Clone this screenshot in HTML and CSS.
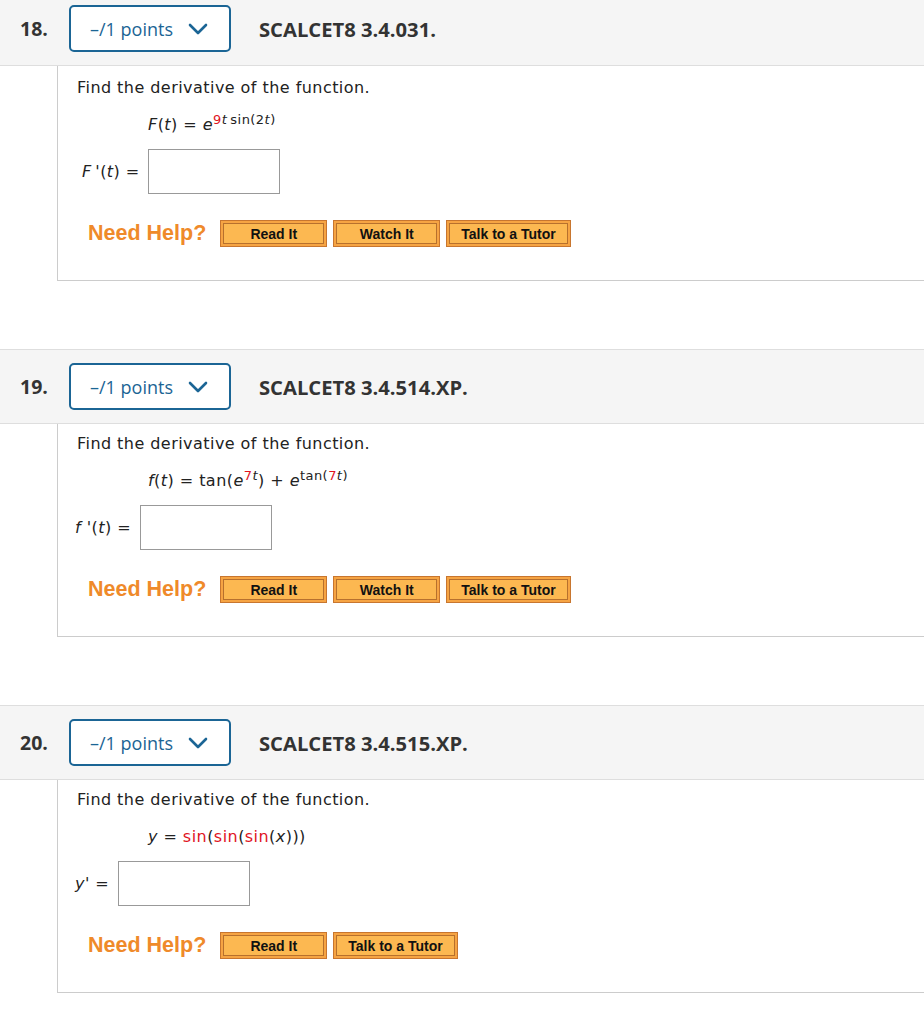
FILE: index.html
```html
<!DOCTYPE html>
<html>
<head>
<meta charset="utf-8">
<link rel="stylesheet" href="styles.css">
</head>
<body>
<div class="page">

  <section class="question">
    <div class="q-header">
      <span class="q-num">18.</span>
      <button class="points">–/1 points
        <svg class="chev" width="20" height="12" viewBox="0 0 20 12"><polyline points="2,2 10,10 18,2" fill="none" stroke="#1b6595" stroke-width="2.6" stroke-linecap="round" stroke-linejoin="round"/></svg>
      </button>
      <span class="q-title">SCALCET8 3.4.031.</span>
    </div>
    <div class="q-body first">
      <p class="prompt">Find the derivative of the function.</p>
      <div class="eq"><i>F</i>(<i>t</i>) = <i>e</i><sup><span class="red">9</span><i>t</i>&#8201;sin(2<i>t</i>)</sup></div>
      <div class="answer a18"><span class="label"><i>F</i>&#8201;'(<i>t</i>) = </span><span class="box"></span></div>
      <div class="help">
        <span class="need">Need Help?</span>
        <span class="hbtn"><span>Read It</span></span>
        <span class="hbtn"><span>Watch It</span></span>
        <span class="hbtn"><span>Talk to a Tutor</span></span>
      </div>
    </div>
  </section>

  <section class="question">
    <div class="q-header">
      <span class="q-num">19.</span>
      <button class="points">–/1 points
        <svg class="chev" width="20" height="12" viewBox="0 0 20 12"><polyline points="2,2 10,10 18,2" fill="none" stroke="#1b6595" stroke-width="2.6" stroke-linecap="round" stroke-linejoin="round"/></svg>
      </button>
      <span class="q-title">SCALCET8 3.4.514.XP.</span>
    </div>
    <div class="q-body">
      <p class="prompt">Find the derivative of the function.</p>
      <div class="eq"><i>f</i>(<i>t</i>) = tan(<i>e</i><sup><span class="red">7</span><i>t</i></sup>) + <i>e</i><sup>tan(<span class="red">7</span><i>t</i>)</sup></div>
      <div class="answer"><span class="label"><i>f</i> '(<i>t</i>) = </span><span class="box"></span></div>
      <div class="help">
        <span class="need">Need Help?</span>
        <span class="hbtn"><span>Read It</span></span>
        <span class="hbtn"><span>Watch It</span></span>
        <span class="hbtn"><span>Talk to a Tutor</span></span>
      </div>
    </div>
  </section>

  <section class="question">
    <div class="q-header">
      <span class="q-num">20.</span>
      <button class="points">–/1 points
        <svg class="chev" width="20" height="12" viewBox="0 0 20 12"><polyline points="2,2 10,10 18,2" fill="none" stroke="#1b6595" stroke-width="2.6" stroke-linecap="round" stroke-linejoin="round"/></svg>
      </button>
      <span class="q-title">SCALCET8 3.4.515.XP.</span>
    </div>
    <div class="q-body">
      <p class="prompt">Find the derivative of the function.</p>
      <div class="eq"><i>y</i> = <span class="red">sin</span>(<span class="red">sin</span>(<span class="red">sin</span>(<i>x</i>)))</div>
      <div class="answer"><span class="label"><i>y</i>' = </span><span class="box"></span></div>
      <div class="help">
        <span class="need">Need Help?</span>
        <span class="hbtn"><span>Read It</span></span>
        <span class="hbtn"><span>Talk to a Tutor</span></span>
      </div>
    </div>
  </section>

</div>
</body>
</html>
```

FILE: styles.css
```css
html, body {
  margin: 0;
  padding: 0;
  background: #fff;
}

.page {
  margin-top: -9px;
}

.question {
  margin-bottom: 68px;
}

.q-header {
  box-sizing: border-box;
  height: 75px;
  display: flex;
  align-items: center;
  padding-left: 20px;
  background: #f5f5f5;
  border-top: 1px solid #dedede;
  border-bottom: 1px solid #dedede;
  font-family: "Open Sans", "Noto Sans", sans-serif;
  color: #333;
}

.q-num {
  font-weight: 700;
  font-size: 19.5px;
  width: 49px;
}

.points {
  box-sizing: border-box;
  height: 47px;
  width: 162px;
  display: flex;
  align-items: center;
  padding: 0 0 0 19px;
  border: 2px solid #1b6595;
  border-radius: 5px;
  background: #fff;
  color: #1b6595;
  font-family: "Open Sans", "Noto Sans", sans-serif;
  font-size: 18px;
  font-weight: 400;
}

.chev {
  margin-left: 15px;
}

.q-title {
  margin-left: 28px;
  font-weight: 700;
  font-size: 20.2px;
}

.q-body {
  margin-left: 57px;
  border-left: 1px solid #cccccc;
  border-bottom: 1px solid #cccccc;
  padding: 10px 0 33px 19px;
  font-family: "DejaVu Sans", Verdana, sans-serif;
  font-size: 16px;
  letter-spacing: 0.45px;
  color: #222;
}

.q-body.first {
  padding-top: 12px;
}

.prompt {
  margin: 0;
  line-height: 20px;
}

.eq {
  margin: 17px 0 0 71px;
  line-height: 20px;
  height: 20px;
}

.eq sup {
  font-size: 13px;
  line-height: 0;
  vertical-align: 6px;
}

.red {
  color: #e0141e;
}

.answer {
  display: flex;
  align-items: center;
  margin: 14px 0 0 -2px;
}

.answer.a18 {
  margin-left: 5px;
}

.label {
  margin-right: 3px;
  white-space: pre;
}

.box {
  display: block;
  box-sizing: border-box;
  width: 132px;
  height: 45px;
  border: 1px solid #999;
  background: #fff;
}

.help {
  display: flex;
  align-items: center;
  margin: 26px 0 0 11px;
  gap: 6px;
  letter-spacing: 0;
}

.need {
  font-family: "Liberation Sans", Arial, sans-serif;
  font-weight: 700;
  font-size: 21.5px;
  color: #ef8a2a;
  margin-right: 8px;
}

.hbtn {
  box-sizing: border-box;
  display: inline-block;
  height: 27px;
  min-width: 107px;
  padding: 2px;
  border: 1px solid #c8762f;
  background: #f6a443;
}

.hbtn span {
  box-sizing: border-box;
  display: flex;
  align-items: center;
  justify-content: center;
  height: 21px;
  padding: 0 11px;
  border: 1px solid #b7702d;
  background: #fcb851;
  font-family: "Liberation Sans", Arial, sans-serif;
  font-weight: 700;
  font-size: 14px;
  color: #111;
}
```
